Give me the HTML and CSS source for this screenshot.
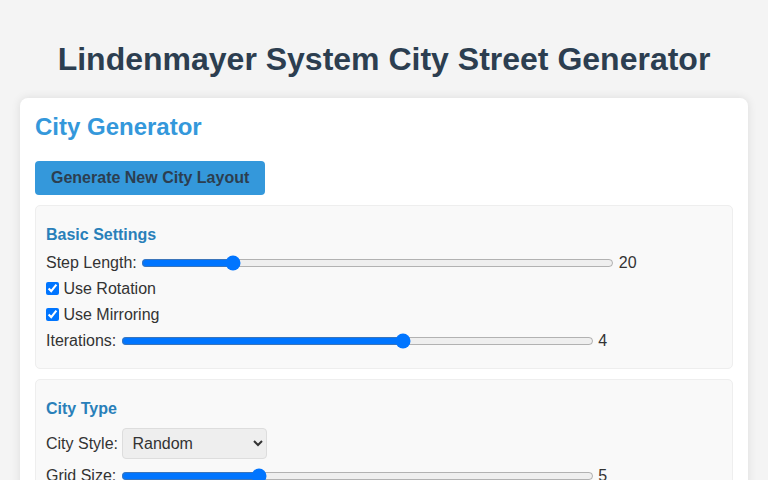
FILE: index.html
```html
<!DOCTYPE html>
<html lang="en">
<head>
    <meta charset="UTF-8">
    <meta name="viewport" content="width=device-width, initial-scale=1.0">
    <title>L-System City Generator</title>
    <link rel="stylesheet" href="styles.css">
</head>
<body>
    <h1>Lindenmayer System City Street Generator</h1>

    <div class="container">
        <h2>City Generator</h2>
        <button id="generate">Generate New City Layout</button>

        <div class="settings">
            <h3>Basic Settings</h3>
            <div class="control">
                <label for="step">Step Length:</label>
                <input type="range" id="step" min="2" max="100" value="20">
                <span>20</span>
            </div>
            <div class="control">
                <input type="checkbox" id="rotation" checked>
                <label for="rotation">Use Rotation</label>
            </div>
            <div class="control">
                <input type="checkbox" id="mirroring" checked>
                <label for="mirroring">Use Mirroring</label>
            </div>
            <div class="control">
                <label for="iterations">Iterations:</label>
                <input type="range" id="iterations" min="1" max="6" value="4">
                <span>4</span>
            </div>
        </div>

        <div class="settings">
            <h3>City Type</h3>
            <div class="control">
                <label for="style">City Style:</label>
                <select id="style">
                    <option>Random</option>
                    <option>Grid</option>
                    <option>Radial</option>
                    <option>Organic</option>
                </select>
            </div>
            <div class="control">
                <label for="grid">Grid Size:</label>
                <input type="range" id="grid" min="3" max="10" value="5">
                <span>5</span>
            </div>
        </div>
    </div>
</body>
</html>
```

FILE: styles.css
```css
body {
    margin: 0;
    padding: 20px;
    font-family: "Liberation Sans", Arial, sans-serif;
    background-color: #f4f4f4;
    color: #333;
}

h1 {
    text-align: center;
    color: #2c3e50;
    font-size: 32px;
    margin: 21px 0 20px;
}

.container {
    background: white;
    border-radius: 8px;
    box-shadow: 0 0 10px rgba(0, 0, 0, 0.1);
    padding: 15px;
}

h2 {
    color: #3498db;
    font-size: 24px;
    margin: 0 0 20px;
}

button {
    background-color: #3498db;
    color: #2c3e50;
    border: none;
    border-radius: 4px;
    padding: 8px 16px;
    font-family: inherit;
    font-size: 16px;
    font-weight: bold;
    cursor: pointer;
}

.settings {
    background: #f9f9f9;
    border: 1px solid #eee;
    border-radius: 5px;
    padding: 10px;
    margin-top: 10px;
}

h3 {
    color: #2980b9;
    font-size: 16px;
    margin: 10px 0;
}

.control {
    margin-bottom: 8px;
    line-height: 18px;
}

input[type="range"] {
    width: 70%;
    height: 12px;
    margin: 0;
    vertical-align: -1px;
}

input[type="checkbox"] {
    margin: 0;
    vertical-align: -1px;
}

select {
    padding: 5px;
    border: 1px solid #ddd;
    border-radius: 4px;
    font-family: inherit;
    font-size: 16px;
    width: 145px;
    background-color: #eee;
    color: #333;
}
```
